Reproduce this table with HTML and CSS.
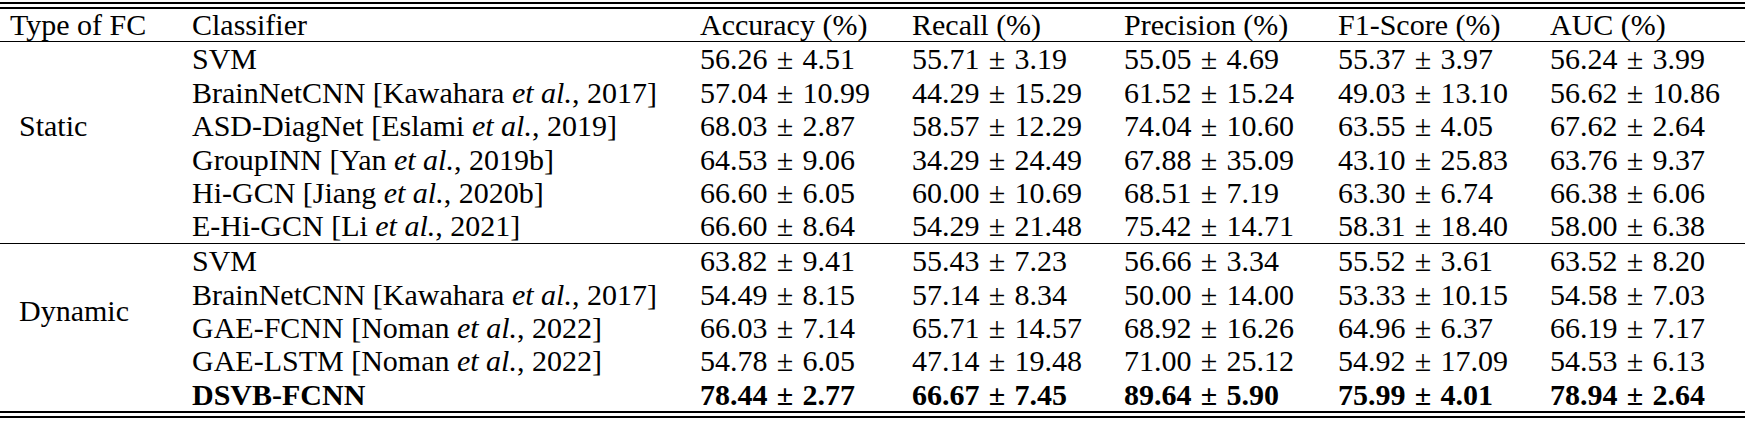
FILE: index.html
```html
<!DOCTYPE html>
<html>
<head>
<meta charset="utf-8">
<link rel="stylesheet" href="styles.css">
</head>
<body>
<div class="table">
  <div class="rule"></div>
  <div class="gap"></div>
  <div class="rule"></div>
  <div class="grid head">
    <div class="c first">Type of FC</div>
    <div class="c">Classifier</div>
    <div class="c">Accuracy (%)</div>
    <div class="c">Recall (%)</div>
    <div class="c">Precision (%)</div>
    <div class="c">F1-Score (%)</div>
    <div class="c">AUC (%)</div>
  </div>
  <div class="rule"></div>
  <div class="grid group">
    <div class="label span6">Static</div>
    <div class="c">SVM</div><div class="c">56.26 <span class="pm">±</span> 4.51</div><div class="c">55.71 <span class="pm">±</span> 3.19</div><div class="c">55.05 <span class="pm">±</span> 4.69</div><div class="c">55.37 <span class="pm">±</span> 3.97</div><div class="c">56.24 <span class="pm">±</span> 3.99</div>
    <div class="c">BrainNetCNN [Kawahara <i>et al.</i>, 2017]</div><div class="c">57.04 <span class="pm">±</span> 10.99</div><div class="c">44.29 <span class="pm">±</span> 15.29</div><div class="c">61.52 <span class="pm">±</span> 15.24</div><div class="c">49.03 <span class="pm">±</span> 13.10</div><div class="c">56.62 <span class="pm">±</span> 10.86</div>
    <div class="c">ASD-DiagNet [Eslami <i>et al.</i>, 2019]</div><div class="c">68.03 <span class="pm">±</span> 2.87</div><div class="c">58.57 <span class="pm">±</span> 12.29</div><div class="c">74.04 <span class="pm">±</span> 10.60</div><div class="c">63.55 <span class="pm">±</span> 4.05</div><div class="c">67.62 <span class="pm">±</span> 2.64</div>
    <div class="c">GroupINN [Yan <i>et al.</i>, 2019b]</div><div class="c">64.53 <span class="pm">±</span> 9.06</div><div class="c">34.29 <span class="pm">±</span> 24.49</div><div class="c">67.88 <span class="pm">±</span> 35.09</div><div class="c">43.10 <span class="pm">±</span> 25.83</div><div class="c">63.76 <span class="pm">±</span> 9.37</div>
    <div class="c">Hi-GCN [Jiang <i>et al.</i>, 2020b]</div><div class="c">66.60 <span class="pm">±</span> 6.05</div><div class="c">60.00 <span class="pm">±</span> 10.69</div><div class="c">68.51 <span class="pm">±</span> 7.19</div><div class="c">63.30 <span class="pm">±</span> 6.74</div><div class="c">66.38 <span class="pm">±</span> 6.06</div>
    <div class="c">E-Hi-GCN [Li <i>et al.</i>, 2021]</div><div class="c">66.60 <span class="pm">±</span> 8.64</div><div class="c">54.29 <span class="pm">±</span> 21.48</div><div class="c">75.42 <span class="pm">±</span> 14.71</div><div class="c">58.31 <span class="pm">±</span> 18.40</div><div class="c">58.00 <span class="pm">±</span> 6.38</div>
  </div>
  <div class="rule"></div>
  <div class="grid group">
    <div class="label span5">Dynamic</div>
    <div class="c">SVM</div><div class="c">63.82 <span class="pm">±</span> 9.41</div><div class="c">55.43 <span class="pm">±</span> 7.23</div><div class="c">56.66 <span class="pm">±</span> 3.34</div><div class="c">55.52 <span class="pm">±</span> 3.61</div><div class="c">63.52 <span class="pm">±</span> 8.20</div>
    <div class="c">BrainNetCNN [Kawahara <i>et al.</i>, 2017]</div><div class="c">54.49 <span class="pm">±</span> 8.15</div><div class="c">57.14 <span class="pm">±</span> 8.34</div><div class="c">50.00 <span class="pm">±</span> 14.00</div><div class="c">53.33 <span class="pm">±</span> 10.15</div><div class="c">54.58 <span class="pm">±</span> 7.03</div>
    <div class="c">GAE-FCNN [Noman <i>et al.</i>, 2022]</div><div class="c">66.03 <span class="pm">±</span> 7.14</div><div class="c">65.71 <span class="pm">±</span> 14.57</div><div class="c">68.92 <span class="pm">±</span> 16.26</div><div class="c">64.96 <span class="pm">±</span> 6.37</div><div class="c">66.19 <span class="pm">±</span> 7.17</div>
    <div class="c">GAE-LSTM [Noman <i>et al.</i>, 2022]</div><div class="c">54.78 <span class="pm">±</span> 6.05</div><div class="c">47.14 <span class="pm">±</span> 19.48</div><div class="c">71.00 <span class="pm">±</span> 25.12</div><div class="c">54.92 <span class="pm">±</span> 17.09</div><div class="c">54.53 <span class="pm">±</span> 6.13</div>
    <div class="c b">DSVB-FCNN</div><div class="c b">78.44 <span class="pm">±</span> 2.77</div><div class="c b">66.67 <span class="pm">±</span> 7.45</div><div class="c b">89.64 <span class="pm">±</span> 5.90</div><div class="c b">75.99 <span class="pm">±</span> 4.01</div><div class="c b">78.94 <span class="pm">±</span> 2.64</div>
  </div>
  <div class="rule"></div>
  <div class="gap"></div>
  <div class="rule"></div>
</div>
</body>
</html>
```

FILE: styles.css
```css
html, body {
  margin: 0;
  padding: 0;
  background: #fff;
}
.table {
  padding-top: 2px;
  width: 1745px;
  font-family: "Liberation Serif", "Times New Roman", serif;
  font-size: 30px;
  color: #000;
}
.rule {
  height: 1.6px;
  background: #000;
}
.gap {
  height: 3.6px;
}
.grid {
  display: grid;
  grid-template-columns: 192px 508px 212px 212px 214px 212px 1fr;
  grid-auto-rows: 33.4px;
}
.head {
  grid-auto-rows: 32px;
}
.c {
  line-height: 33.4px;
  white-space: nowrap;
}
.head .c {
  line-height: 32px;
}
.first {
  padding-left: 10px;
}
.pm {
  margin: 0 0.06em;
}
.label {
  grid-column: 1;
  align-self: center;
  padding-left: 19px;
  padding-bottom: 33.4px;
  line-height: 33.4px;
}
.span6 {
  grid-row: 1 / span 6;
}
.span5 {
  grid-row: 1 / span 5;
}
.b {
  font-weight: bold;
}
```
